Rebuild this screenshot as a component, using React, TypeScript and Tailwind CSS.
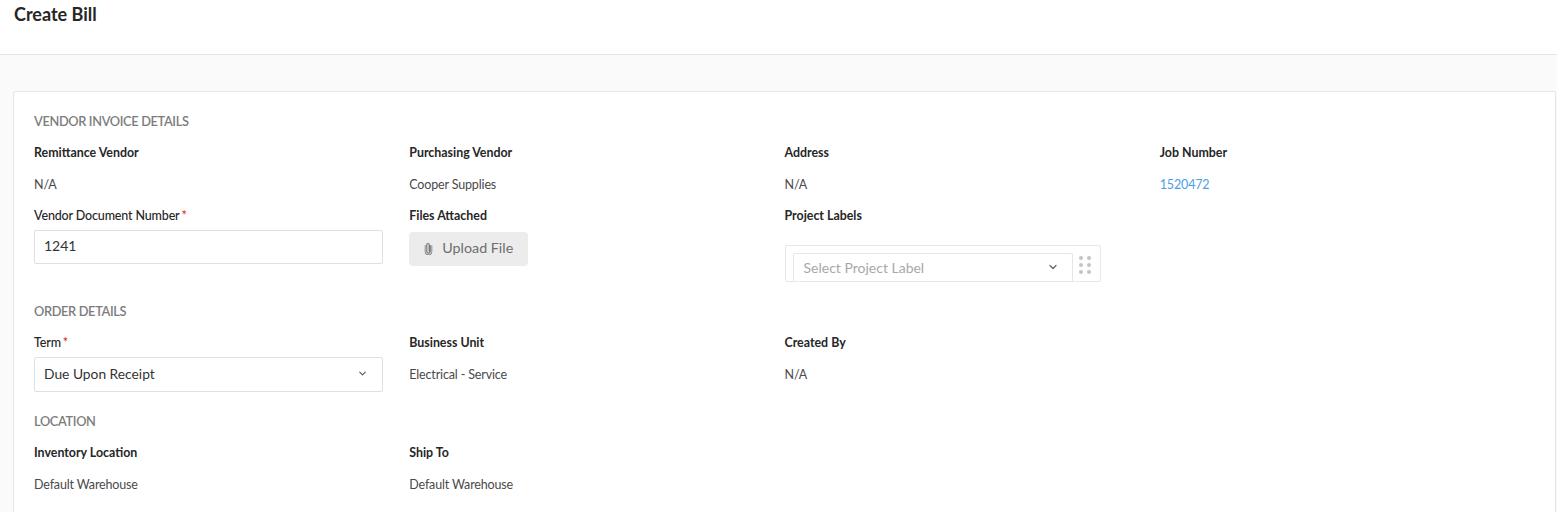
import { ChevronDown } from "lucide-react";

const font = { fontFamily: 'Lato, "Noto Sans", sans-serif' };

function SectionTitle({ children, className }: { children: string; className: string }) {
  return <h2 className={`text-[12.8px] leading-[16px] tracking-[-0.35px] text-[#7c7c7c] font-semibold ${className}`}>{children}</h2>;
}

function Label({ children, required }: { children: string; required?: boolean }) {
  return (
    <div className={`leading-[16px] text-[#262626] ${required ? "text-[12.5px] tracking-[-0.15px] font-medium" : "text-[12.4px] font-bold"}`}>
      {children}
      {required && <span className="text-[#e02020] ml-[2px]">*</span>}
    </div>
  );
}

function Value({ children, link }: { children: string; link?: boolean }) {
  return (
    <div className={`mt-[16px] text-[12.5px] leading-[16px] tracking-[-0.15px] ${link ? "text-[#4a9fe8]" : "text-[#4a4a4a]"}`}>{children}</div>
  );
}

function Field({ label, value, link }: { label: string; value: string; link?: boolean }) {
  return (
    <div>
      <Label>{label}</Label>
      <Value link={link}>{value}</Value>
    </div>
  );
}

export default function App() {
  return (
    <div className="h-[512px] overflow-hidden bg-[#fafafa]" style={font}>
      <header className="h-[55px] bg-white border-b border-[#e6e6e6] pl-[14px] pt-[4px]">
        <h1 className="text-[18px] leading-[20px] font-bold text-[#262626]">Create Bill</h1>
      </header>

      <main className="pt-[36px] pl-[13px] pr-[1px]">
        <div className="h-[500px] bg-white border border-[#e6e6e6] rounded-[2px] pt-[21px] pl-[20px] pr-[20px]">
          <SectionTitle className="mb-[16px]">VENDOR INVOICE DETAILS</SectionTitle>

          <div className="grid grid-cols-4">
            <Field label="Remittance Vendor" value="N/A" />
            <Field label="Purchasing Vendor" value="Cooper Supplies" />
            <Field label="Address" value="N/A" />
            <Field label="Job Number" value="1520472" link />
          </div>

          <div className="grid grid-cols-4 mt-[15px]">
            <div className="pr-[26px]">
              <Label required>Vendor Document Number</Label>
              <div className="mt-[6px] h-[34px] border border-[#e0e0e0] rounded-[2px] px-[9px] pb-[3px] flex items-center text-[14px] text-[#333333]">
                1241
              </div>
            </div>
            <div>
              <Label>Files Attached</Label>
              <button className="mt-[8px] h-[34px] w-[119px] rounded-[4px] bg-[#ececec] pb-[2px] flex items-center justify-center gap-[9px] text-[14.3px] text-[#6e6e6e]">
                <svg width="9" height="13" viewBox="0 0 9 13" fill="none" stroke="#707070" strokeWidth="1.1" strokeLinecap="round">
                  <path d="M6.2 3.5v6a1.7 1.7 0 0 1-3.4 0V2.7a1.2 1.2 0 0 1 2.4 0v6.4" />
                  <path d="M7.8 3.5v6a3.3 3.3 0 0 1-6.6 0V3.5" opacity="0.7" />
                </svg>
                Upload File
              </button>
            </div>
            <div>
              <Label>Project Labels</Label>
              <div className="mt-[21px] w-[316px] h-[37px] border border-[#e8e8e8] rounded-[2px] pl-[7px] flex items-start">
                <div className="mt-[7px] w-[280px] h-[29px] border border-b-0 border-[#e6e6e6] rounded-t-[2px] pl-[10px] pr-[13px] pb-[2px] flex items-center justify-between text-[14px] text-[#a8a8a8]">
                  Select Project Label
                  <ChevronDown size={12} strokeWidth={2.5} className="text-[#666666]" />
                </div>
                <div className="ml-[6px] mt-[10px] grid grid-cols-2 gap-x-[4px] gap-y-[3px]">
                  {[0, 1, 2, 3, 4, 5].map((i) => (
                    <span key={i} className="w-[4px] h-[4px] rounded-full bg-[#c4c4c4]" />
                  ))}
                </div>
              </div>
            </div>
          </div>

          <SectionTitle className="mt-[21px] mb-[16px]">ORDER DETAILS</SectionTitle>

          <div className="grid grid-cols-4">
            <div className="pr-[26px]">
              <Label required>Term</Label>
              <div className="mt-[6px] h-[35px] border border-[#e0e0e0] rounded-[2px] pl-[9px] pr-[14px] flex items-center justify-between text-[13.8px] text-[#333333]">
                Due Upon Receipt
                <ChevronDown size={11} strokeWidth={2.5} className="text-[#555555] -mt-[3px]" />
              </div>
            </div>
            <Field label="Business Unit" value="Electrical - Service" />
            <Field label="Created By" value="N/A" />
          </div>

          <SectionTitle className="mt-[21px] mb-[16px]">LOCATION</SectionTitle>

          <div className="grid grid-cols-4">
            <Field label="Inventory Location" value="Default Warehouse" />
            <Field label="Ship To" value="Default Warehouse" />
          </div>
        </div>
      </main>
    </div>
  );
}
